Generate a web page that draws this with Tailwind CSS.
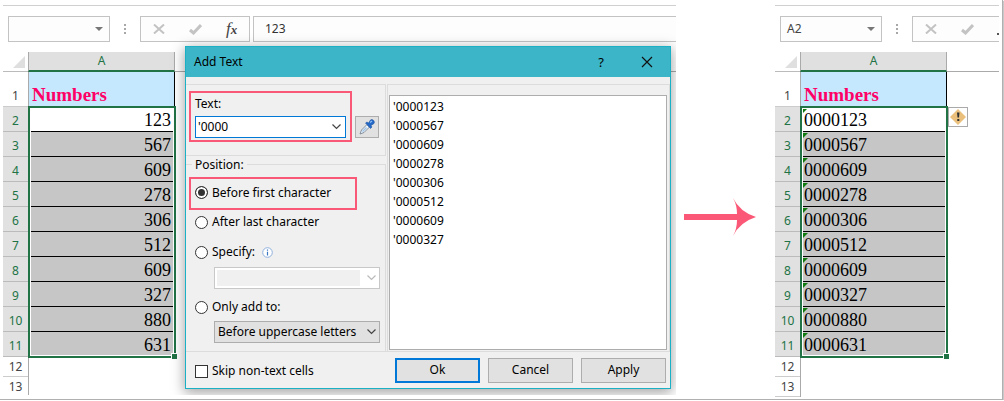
<!DOCTYPE html>
<html lang="en">
<head>
    <meta charset="UTF-8">
    <meta name="viewport" content="width=device-width, initial-scale=1.0">
    <title>Add Text</title>
    <script src="https://cdn.jsdelivr.net/npm/@tailwindcss/browser@4"></script>
</head>
<body class="bg-white font-['Noto_Sans',sans-serif] text-[12px] text-black overflow-hidden">

    <main class="flex mr-px h-[400px] pt-[5px] pl-[3px] pr-[3px] border-r border-b border-[#b0b0b0] shadow-[1px_1px_1px_#c8c8c8]">

        <!-- Sheet before the change -->
        <section class="relative flex-1 min-w-0 h-[390px] overflow-hidden border-t border-[#d0d0d0] pt-[10px]">
            <div class="flex h-[26px] pl-[5px]">
                <div class="flex items-center justify-end w-[102px] pr-[6px] bg-[#fdfdfd] border border-[#c3c3c3]">
                    <svg class="w-[8px] h-[4px]" viewBox="0 0 8 4" fill="#777"><path d="M0 0h8L4 4z"/></svg>
                </div>
                <div class="flex items-center justify-center w-[30px]">
                    <svg class="w-[2px] h-[10px]" viewBox="0 0 2 10" fill="#a8a8a8"><path d="M0 0h2v2H0zM0 4h2v2H0zM0 8h2v2H0z"/></svg>
                </div>
                <div class="flex items-center w-[110px] pl-[12px] bg-[#fdfdfd] border border-[#c3c3c3]">
                    <svg class="w-[12px] h-[10px]" viewBox="0 0 12 10" fill="none" stroke="#c3c3c3" stroke-width="2"><path d="M1 .5l10 9M11 .5l-10 9"/></svg>
                    <svg class="w-[13px] h-[11px] ml-[24px]" viewBox="0 0 13 11" fill="none" stroke="#c3c3c3" stroke-width="3"><path d="M1 6l3.500 3L12 1"/></svg>
                    <span class="ml-[24px] pb-[2px] font-['Liberation_Serif',serif] italic text-[17px] leading-none text-[#444]">f<span class="text-[13px] font-bold">x</span></span>
                </div>
                <div class="flex flex-1 items-center ml-[3px] pl-[11px] bg-[#fdfdfd] border border-r-0 border-[#c3c3c3] text-[#333]">123</div>
            </div>
            <div class="flex mt-[10px]">
                <div class="relative w-[172px] shrink-0">
                    <table class="w-full table-fixed border-separate border-spacing-0">
                        <thead>
                            <tr class="h-[20px]">
                                <th class="w-[25px] p-0 border-b border-[#bbb] align-bottom">
                                    <svg class="w-[12px] h-[12px] ml-[10px] mb-[3px]" viewBox="0 0 12 12" fill="#dfdfdf"><path d="M12 0v12H0z"/></svg>
                                </th>
                                <th class="p-0 bg-[#e0e0e0] border-x border-x-[#aaa] border-b-2 border-b-[#217346] font-normal text-[12px] leading-[18px] text-[#217346]">A</th>
                            </tr>
                        </thead>
                        <tbody id="numbersBefore"></tbody>
                    </table>
                    <div class="absolute left-[25px] top-[54px] w-[148px] h-[252px] border-2 border-[#217346] shadow-[inset_0_0_0_1px_white]"></div>
                    <div class="absolute left-[168px] top-[301px] w-[7px] h-[7px] bg-[#217346] border border-white"></div>
                </div>
                <div class="flex-1 h-[20px] border-b border-[#aaa]"></div>
            </div>

            <!-- Add Text dialog -->
            <form class="absolute left-[182px] right-[5px] top-[40px] bg-[#f0f0f0] border border-[#1bb0c4] shadow-[0_3px_12px_1px_rgba(0,0,0,0.35)]">
                <header class="flex items-center h-[30px] pl-[8px] pr-[17px] bg-[#3cb5c8]">
                    <h1 class="flex-1 text-[12px]">Add Text</h1>
                    <button type="button" class="w-[12px] text-[13px] leading-none">?</button>
                    <button type="button" aria-label="Close" class="ml-[34px]">
                        <svg class="w-[12px] h-[12px]" viewBox="0 0 12 12" fill="none" stroke="#111" stroke-width="1.200"><path d="M1 1l10 10M11 1L1 11"/></svg>
                    </button>
                </header>
                <div class="grid grid-cols-[200px_1fr] gap-x-px pt-[7px]">
                    <div class="h-[267px]">
                        <div class="h-[72px] border border-l-0 border-[#dcdcdc] pt-[6px] pl-[3px] flex gap-[3px]">
                            <div class="w-[163px] h-[51px] border-2 border-[#f95876] px-[4px] pt-[2px]">
                                <label for="addText" class="block h-[21px] leading-[18px]">Text:</label>
                                <div class="flex items-center h-[22px] bg-white border border-[#0078d7] pr-[4px]">
                                    <input id="addText" type="text" value="'0000" class="w-full min-w-0 pl-[2px] outline-none">
                                    <svg class="w-[9px] h-[6px] shrink-0" viewBox="0 0 9 6" fill="none" stroke="#444" stroke-width="1.200"><path d="M.5 .5l4 4 4-4"/></svg>
                                </div>
                            </div>
                            <button type="button" aria-label="Pick text" class="flex items-center justify-center mt-[25px] w-[24px] h-[22px] bg-[#e1e1e1] border border-[#adadad]">
                                <svg class="w-[16px] h-[16px]" viewBox="0 0 16 16">
                                    <path d="M1 15l1.500-4L8 5.500 10.500 8 5 13.500z" fill="#eaf2fa" stroke="#7b8794" stroke-width=".9"/>
                                    <path d="M3.500 12.500l4-4" stroke="#9ec4e8" stroke-width="1.500"/>
                                    <path d="M6.500 4l1.500-1 1.500 1 2-3c1.500-1.500 5 1 3.500 3.500l-3 2 1 1.500-1.500 1.500z" fill="#2468c8" stroke="#174a96" stroke-width=".5"/>
                                    <path d="M11 3.500l2-1.500" stroke="#8fc0f5" stroke-width="1.200"/>
                                </svg>
                            </button>
                        </div>
                        <fieldset class="h-[195px] border-t border-r border-[#dcdcdc]">
                            <legend class="ml-[6px] px-[3px] leading-[17px]">Position:</legend>
                            <label class="flex items-center gap-[4px] ml-[3px] mt-[4px] w-[168px] h-[33px] pl-[4px] pb-[2px] border-2 border-[#f95876]">
                                <input type="radio" name="position" checked class="appearance-none w-[13px] h-[13px] rounded-full bg-white border border-[#333] checked:bg-[#333] checked:shadow-[inset_0_0_0_2px_white]">Before first character
                            </label>
                            <label class="flex items-center gap-[4px] ml-[9px] h-[24px]">
                                <input type="radio" name="position" class="appearance-none w-[13px] h-[13px] rounded-full bg-white border border-[#333] checked:bg-[#333] checked:shadow-[inset_0_0_0_2px_white]">After last character
                            </label>
                            <label class="flex items-center gap-[4px] ml-[9px] mt-[6px] h-[24px]">
                                <input type="radio" name="position" class="appearance-none w-[13px] h-[13px] rounded-full bg-white border border-[#333] checked:bg-[#333] checked:shadow-[inset_0_0_0_2px_white]">Specify:
                                <svg class="w-[11px] h-[11px] ml-[3px]" viewBox="0 0 11 11" fill="none"><circle cx="5.500" cy="5.500" r="4.800" fill="#fff" stroke="#8fb0dc"/><path d="M5.500 2.500v1.200M5.500 4.800v3.700" stroke="#3b78c4" stroke-width="1.200"/></svg>
                            </label>
                            <div class="relative flex items-center ml-[28px] mt-[3px] mr-[5px]">
                                <input type="text" disabled aria-label="Specify position" class="w-full h-[22px] bg-[#f0f0f0] border border-[#c8c8c8] shadow-[inset_0_0_0_2px_white,inset_-19px_0_0_white]">
                                <svg class="absolute right-[4px] w-[9px] h-[6px]" viewBox="0 0 9 6" fill="none" stroke="#bbb" stroke-width="1.200"><path d="M.5 .5l4 4 4-4"/></svg>
                            </div>
                            <label class="flex items-center gap-[4px] ml-[9px] mt-[6px] h-[24px]">
                                <input type="radio" name="position" class="appearance-none w-[13px] h-[13px] rounded-full bg-white border border-[#333] checked:bg-[#333] checked:shadow-[inset_0_0_0_2px_white]">Only add to:
                            </label>
                            <div class="relative flex items-center ml-[28px] mt-[2px] mr-[5px]">
                                <select aria-label="Only add to" class="appearance-none w-full h-[22px] pl-[3px] bg-[#e1e1e1] border border-[#adadad]">
                                    <option>Before uppercase letters</option>
                                    <option>After uppercase letters</option>
                                </select>
                                <svg class="absolute right-[4px] w-[9px] h-[6px]" viewBox="0 0 9 6" fill="none" stroke="#444" stroke-width="1.200"><path d="M.5 .5l4 4 4-4"/></svg>
                            </div>
                        </fieldset>
                    </div>
                    <div class="border-t border-x border-[#dcdcdc] pt-[10px] pl-px pr-[2px] pb-px">
                        <ul id="previewList" class="h-[255px] bg-white border border-[#adadad] pt-px pl-[3px]"></ul>
                    </div>
                </div>
                <footer class="flex items-center gap-[8px] h-[37px] border-t border-[#dcdcdc] pl-[9px] pr-[4px]">
                    <label class="flex flex-1 items-center gap-[4px] pt-[2px]">
                        <input type="checkbox" class="appearance-none w-[13px] h-[13px] bg-white border border-[#333]">Skip non-text cells
                    </label>
                    <button type="submit" class="w-[85px] h-[25px] bg-[#e1e1e1] border-2 border-[#0078d7]">Ok</button>
                    <button type="button" class="w-[85px] h-[25px] bg-[#e1e1e1] border border-[#adadad]">Cancel</button>
                    <button type="button" class="w-[85px] h-[25px] bg-[#e1e1e1] border border-[#adadad]">Apply</button>
                </footer>
            </form>
        </section>

        <!-- Arrow -->
        <div class="w-[99px] shrink-0 pt-[192px] pl-[8px]">
            <svg class="w-[72px] h-[40px]" viewBox="0 0 72 40" fill="#fa5876"><path d="M0 17h53Q53 8 49 1 56 15 72 20 56 25 49 39 53 32 53 23H0z"/></svg>
        </div>

        <!-- Sheet after the change -->
        <section class="relative w-[224px] shrink-0 h-[394px] overflow-hidden border-t border-[#d0d0d0] pt-[10px]">
            <div class="flex h-[26px] pl-[5px]">
                <div class="flex items-center justify-between w-[102px] shrink-0 pl-[6px] pr-[6px] bg-[#fdfdfd] border border-[#c3c3c3] text-[#444]">
                    A2
                    <svg class="w-[8px] h-[4px]" viewBox="0 0 8 4" fill="#777"><path d="M0 0h8L4 4z"/></svg>
                </div>
                <div class="flex items-center justify-center w-[30px] shrink-0">
                    <svg class="w-[2px] h-[10px]" viewBox="0 0 2 10" fill="#a8a8a8"><path d="M0 0h2v2H0zM0 4h2v2H0zM0 8h2v2H0z"/></svg>
                </div>
                <div class="flex flex-1 items-center pl-[12px] bg-[#fdfdfd] border border-r-0 border-[#c3c3c3]">
                    <svg class="w-[12px] h-[10px]" viewBox="0 0 12 10" fill="none" stroke="#c3c3c3" stroke-width="2"><path d="M1 .5l10 9M11 .5l-10 9"/></svg>
                    <svg class="w-[13px] h-[11px] ml-[24px]" viewBox="0 0 13 11" fill="none" stroke="#c3c3c3" stroke-width="3"><path d="M1 6l3.500 3L12 1"/></svg>
                    <svg class="w-[2px] h-[2px] ml-auto mt-[9px]" viewBox="0 0 2 2" fill="#555"><path d="M0 0h2v2H0z"/></svg>
                </div>
            </div>
            <div class="flex mt-[10px]">
                <div class="relative w-[172px] shrink-0">
                    <table class="w-full table-fixed border-separate border-spacing-0">
                        <thead>
                            <tr class="h-[20px]">
                                <th class="w-[25px] p-0 border-b border-[#bbb] align-bottom">
                                    <svg class="w-[12px] h-[12px] ml-[10px] mb-[3px]" viewBox="0 0 12 12" fill="#dfdfdf"><path d="M12 0v12H0z"/></svg>
                                </th>
                                <th class="p-0 bg-[#e0e0e0] border-x border-x-[#aaa] border-b-2 border-b-[#217346] font-normal text-[12px] leading-[18px] text-[#217346]">A</th>
                            </tr>
                        </thead>
                        <tbody id="numbersAfter"></tbody>
                    </table>
                    <div class="absolute left-[25px] top-[54px] w-[148px] h-[252px] border-2 border-[#217346] shadow-[inset_0_0_0_1px_white]"></div>
                    <div class="absolute left-[168px] top-[301px] w-[7px] h-[7px] bg-[#217346] border border-white"></div>
                    <button type="button" aria-label="Error options" class="absolute left-[173px] top-[55px] w-[20px] h-[20px] bg-white border border-[#aaa]">
                        <svg class="w-[18px] h-[18px]" viewBox="0 0 18 18"><path d="M9 1l8 8-8 8-8-8z" fill="#ebc07c"/><path d="M8 4.500h2.500l-.5 5H8.500zM8.300 11h2v2h-2z" fill="#333"/></svg>
                    </button>
                </div>
                <div class="flex-1 h-[20px] border-b border-[#aaa]"></div>
            </div>
        </section>
    </main>

    <script>
        const numbers = ["123", "567", "609", "278", "306", "512", "609", "327", "880", "631"];

        function fillSheet(id, prefix) {
            let rows = `
                <tr class="h-[35px]">
                    <th class="p-0 border-b border-[#ccc] font-normal text-[12px] leading-[20px] text-[#444] align-bottom">1</th>
                    <td class="p-0 pl-[3px] bg-[#c5e8ff] border-l border-l-[#aaa] border-r border-r-black border-b border-b-[#217346] font-['Liberation_Serif',serif] font-bold text-[19px] leading-[22px] text-[#ff0066] align-bottom">Numbers</td>
                </tr>`;

            numbers.forEach((n, i) => {
                const fill = i === 0 ? "bg-white" : "bg-[#c6c6c6]";
                const line = i === numbers.length - 1 ? "border-white" : "border-black";
                const align = prefix ? "text-left" : "text-right";
                const mark = prefix ? `<svg class="absolute left-[3px] top-[1px] w-[5px] h-[5px]" viewBox="0 0 5 5" fill="#107c10"><path d="M0 0h5L0 5z"/></svg>` : "";
                rows += `
                <tr class="h-[25px]">
                    <th class="p-0 bg-[#e1e1e1] border-b border-[#bbb] font-normal text-[12px] leading-[20px] text-[#217346] align-bottom">${i + 2}</th>
                    <td class="relative p-0 pl-[4px] pr-[4px] ${fill} border-b ${line} font-['Liberation_Serif',serif] text-[18px] leading-[22px] align-bottom ${align}">${mark}${prefix}${n}</td>
                </tr>`;
            });

            [12, 13].forEach(n => {
                rows += `
                <tr class="h-[20px]">
                    <th class="p-0 border-b border-[#ccc] font-normal text-[12px] leading-[18px] text-[#444]">${n}</th>
                    <td class="p-0 border-l border-[#aaa]"></td>
                </tr>`;
            });

            document.getElementById(id).innerHTML = rows;
        }

        fillSheet("numbersBefore", "");
        fillSheet("numbersAfter", "0000");

        document.getElementById("previewList").innerHTML = numbers.slice(0, 8)
            .map(n => `<li class="h-[19px] leading-[19px]">'0000${n}</li>`).join("");
    </script>
</body>
</html>
